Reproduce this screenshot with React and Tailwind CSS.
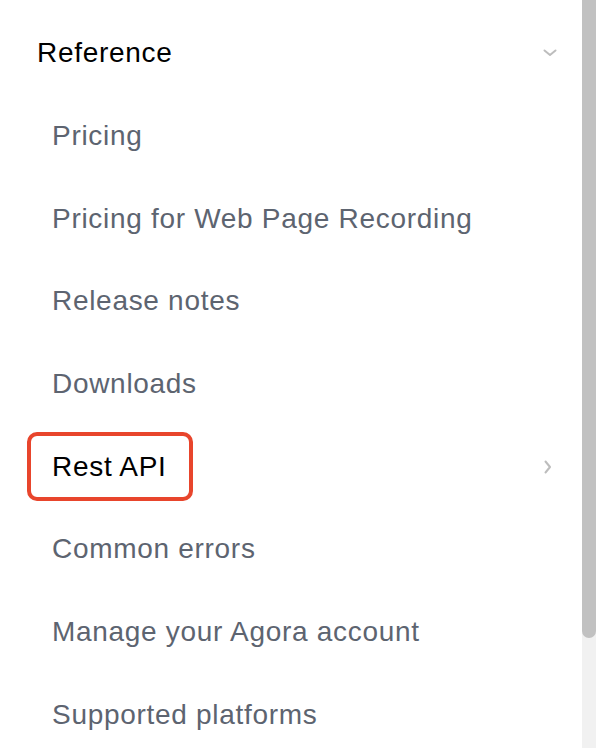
import React from 'react';

const items = [
    'Pricing',
    'Pricing for Web Page Recording',
    'Release notes',
    'Downloads',
    'Rest API',
    'Common errors',
    'Manage your Agora account',
    'Supported platforms',
];

function Chevron({ dir }) {
    return (
        <svg width="16" height="16" viewBox="0 0 16 16" fill="none" stroke="#bdbdbd" strokeWidth="2" strokeLinecap="round" strokeLinejoin="round">
            {dir === 'down' ? <path d="M2.5 5.5 L8 10 L13.5 5.5" /> : <path d="M5.5 2.5 L10 8 L5.5 13.5" />}
        </svg>
    );
}

export default function App() {
    return (
        <div className="flex w-[596px] h-[748px] overflow-hidden bg-white font-['Liberation_Sans',Arial,sans-serif] tracking-[0.7px]">
            <nav className="flex-1 pt-[12px]">
                {/* Section header */}
                <div className="flex items-center justify-between h-[82.7px] pl-[37px] pr-[24px]">
                    <span className="text-[28px] text-black">Reference</span>
                    <Chevron dir="down" />
                </div>

                {items.map(label => (
                    <div key={label} className="flex items-center justify-between h-[82.7px] pr-[26px]">
                        {label === 'Rest API' ? (
                            <span className="ml-[27px] flex items-center h-[69px] w-[166px] pl-[21px] border-4 border-[#e8452c] rounded-[10px] text-[28px] text-black">
                                {label}
                            </span>
                        ) : (
                            <span className="pl-[52px] text-[28px] text-[#5d6470]">{label}</span>
                        )}
                        {label === 'Rest API' && <Chevron dir="right" />}
                    </div>
                ))}
            </nav>

            {/* Scrollbar */}
            <div className="w-[14px] h-full bg-[#f1f1f1]">
                <div className="h-[638px] bg-[#c1c1c1] rounded-b-[7px]" />
            </div>
        </div>
    );
}
